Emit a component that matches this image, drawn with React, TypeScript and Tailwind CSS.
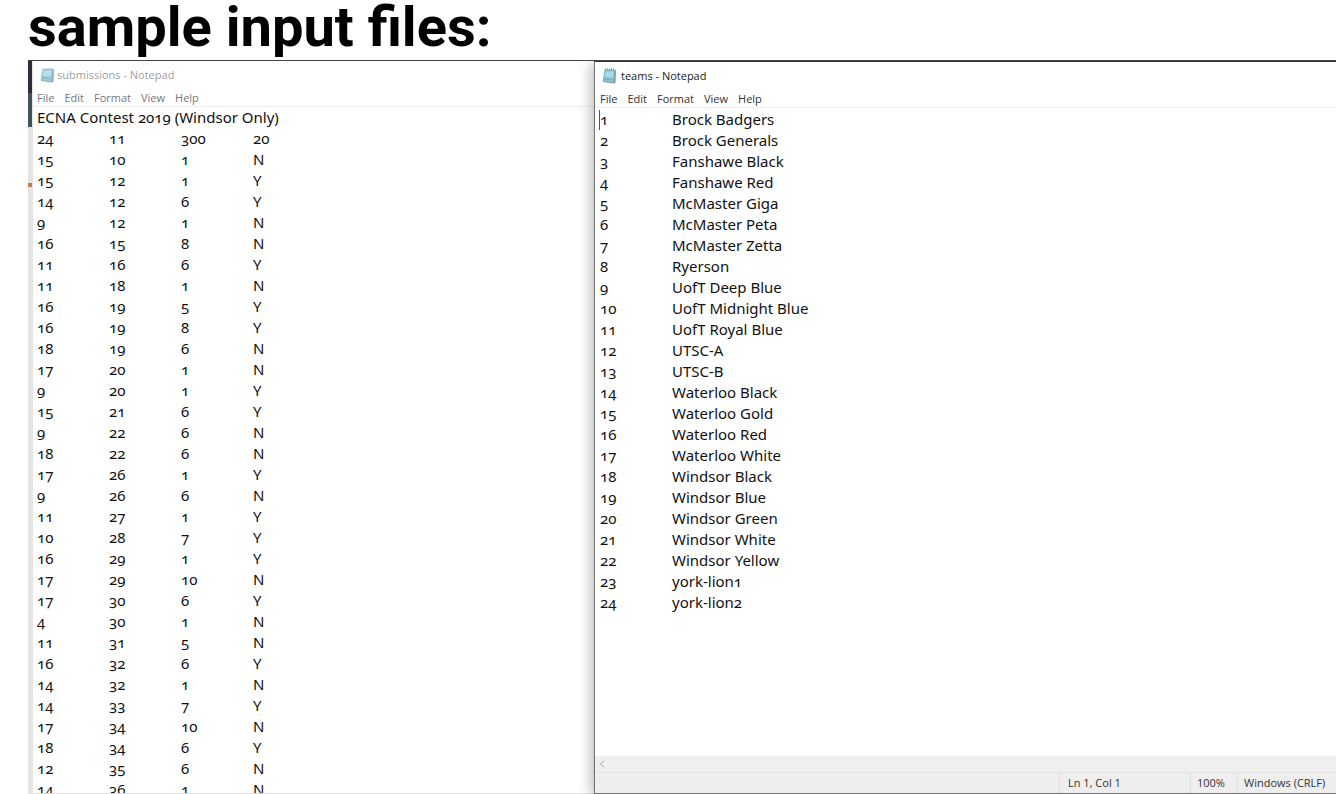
import { ChevronLeft } from "lucide-react"
import clsx from "clsx"

const submissions = `ECNA Contest 2019 (Windsor Only)
24	11	300	20
15	10	1	N
15	12	1	Y
14	12	6	Y
9	12	1	N
16	15	8	N
11	16	6	Y
11	18	1	N
16	19	5	Y
16	19	8	Y
18	19	6	N
17	20	1	N
9	20	1	Y
15	21	6	Y
9	22	6	N
18	22	6	N
17	26	1	Y
9	26	6	N
11	27	1	Y
10	28	7	Y
16	29	1	Y
17	29	10	N
17	30	6	Y
4	30	1	N
11	31	5	N
16	32	6	Y
14	32	1	N
14	33	7	Y
17	34	10	N
18	34	6	Y
12	35	6	N
14	36	1	N`

const teams = [
  "Brock Badgers",
  "Brock Generals",
  "Fanshawe Black",
  "Fanshawe Red",
  "McMaster Giga",
  "McMaster Peta",
  "McMaster Zetta",
  "Ryerson",
  "UofT Deep Blue",
  "UofT Midnight Blue",
  "UofT Royal Blue",
  "UTSC-A",
  "UTSC-B",
  "Waterloo Black",
  "Waterloo Gold",
  "Waterloo Red",
  "Waterloo White",
  "Windsor Black",
  "Windsor Blue",
  "Windsor Green",
  "Windsor White",
  "Windsor Yellow",
  "york-lion1",
  "york-lion2",
]
  .map((name, i) => `${i + 1}\t${name}`)
  .join("\n")

const menus = ["File", "Edit", "Format", "View", "Help"]

function NotepadIcon({ faded }: { faded?: boolean }) {
  return (
    <svg viewBox="0 0 16 16" className={clsx("size-4", faded && "opacity-85")} aria-hidden="true">
      <path d="M4.5 2 15 2 14.5 15 12.5 15.5 2 14z" fill="#8b9699" />
      <path d="M3.5 1.5 14 1.5 12.5 14.5 1.5 13z" fill="#86c3d3" />
      <path d="M5 3.5 12.5 3.5 11.5 13 3.5 12z" fill="#a9dbe6" />
      <path d="M3.5 9 11.8 10 11.5 13 3 12z" fill="#79b9cb" />
      {!faded && <path d="M4.5 .5v2M6.5 .5v2M8.5 .5v2M10.5 .5v2M12.5 .5v2" stroke="#5d7f8b" strokeWidth=".8" />}
    </svg>
  )
}

interface NotepadProps {
  title: string
  text: string
  active?: boolean
}

function Notepad({ title, text, active }: NotepadProps) {
  return (
    <section
      className={clsx(
        "flex min-h-0 min-w-0 flex-col bg-white",
        active
          ? "relative border-y border-l border-[#707070] border-t-[#333] shadow-[-2px_2px_14px_rgba(0,0,0,0.3)]"
          : "border-b border-[#e0e0e0]"
      )}
    >
      <header className={clsx("flex h-7 items-center pl-1.5 text-[11px]", active ? "gap-1 text-[#222]" : "gap-0.5 text-[#a0a0a0]")}>
        <NotepadIcon faded={!active} />
        <h2>{title} - Notepad</h2>
      </header>
      <nav className={clsx("flex h-[18px] items-end gap-2.5 border-b border-[#f0f0f0] text-[11px] leading-4", active ? "pl-[5px] text-[#333]" : "pl-1 text-[#777]")}>
        {menus.map((menu) => (
          <button key={menu} type="button">{menu}</button>
        ))}
      </nav>
      <div className="relative flex min-h-0 flex-1">
        {active && <span className="absolute left-1 top-0.5 h-5 w-px bg-[#555]" />}
        <textarea
          aria-label={title}
          defaultValue={text}
          spellCheck={false}
          wrap="off"
          className={clsx(
            "min-w-0 flex-1 resize-none overflow-hidden font-['Noto_Sans',sans-serif] text-[15px] leading-[21px] text-[#111] oldstyle-nums outline-none [tab-size:72px]",
            active ? "pl-[5px] pt-px" : "pl-1"
          )}
        />
      </div>
      {active && (
        <>
          <div className="flex h-4 items-center bg-[#efefef] pl-px">
            <button type="button" aria-label="Scroll left">
              <ChevronLeft className="size-3 text-[#a0a0a0]" />
            </button>
          </div>
          <footer className="flex h-[21px] justify-end border-t border-[#e2e2e2] bg-[#eee] text-[11px] leading-5 text-[#333]">
            <span className="w-[131px] border-l border-[#dedede] pl-2">Ln 1, Col 1</span>
            <span className="w-[47px] border-l border-[#dedede] pl-1.5">100%</span>
            <span className="w-[99px] whitespace-nowrap border-l border-[#dedede] pl-1.5">Windows (CRLF)</span>
          </footer>
        </>
      )}
    </section>
  )
}

export default function App() {
  return (
    <main className="flex h-screen flex-col bg-white pl-7 font-['Open_Sans',sans-serif]">
      <h1 className="h-[60px] font-['Roboto',sans-serif] text-[56px] font-bold leading-[54px] text-black">sample input files:</h1>
      <div className="flex min-h-0 flex-1 border-t border-[#444]">
        <div className="flex w-[5px] flex-col bg-[#e4e4e4]">
          <div className="h-8 w-1 bg-[#2b2e38]" />
          <div className="h-[34px] w-1 bg-[#43535c]" />
          <div className="mt-14 h-1 w-1 bg-[#c97b45]" />
        </div>
        <div className="grid min-w-0 flex-1 grid-cols-[561fr_742fr] grid-rows-1 overflow-hidden">
          <Notepad title="submissions" text={submissions} />
          <Notepad title="teams" text={teams} active />
        </div>
      </div>
    </main>
  )
}
